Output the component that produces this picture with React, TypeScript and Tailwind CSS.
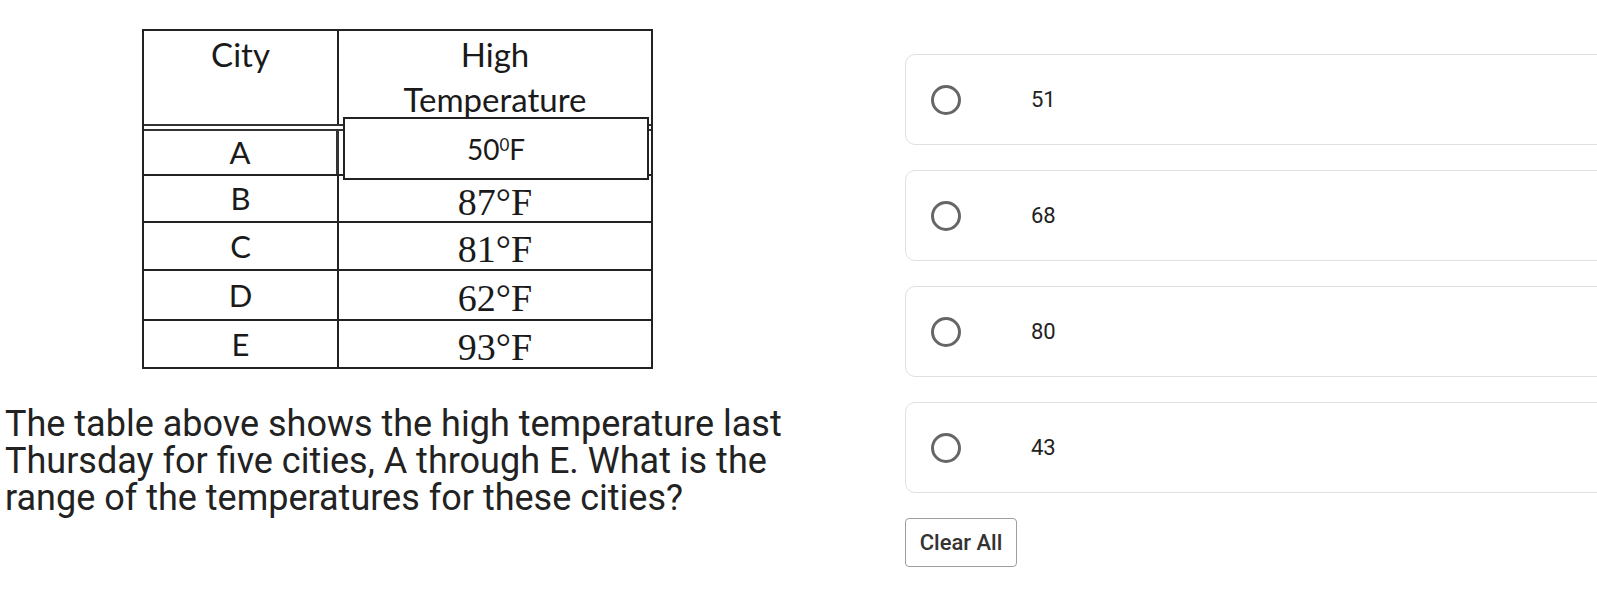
import type { ReactNode } from "react";

type Row = { city: string; temp: string; h: string };

const rows: Row[] = [
  { city: "B", temp: "87°F", h: "h-[47px]" },
  { city: "C", temp: "81°F", h: "h-[48px]" },
  { city: "D", temp: "62°F", h: "h-[50px]" },
  { city: "E", temp: "93°F", h: "h-[46px]" },
];

const choices = ["51", "68", "80", "43"];

const sans = "font-['Lato','Open_Sans',sans-serif]";
const serif = "font-['Liberation_Serif','DejaVu_Serif',serif]";

function Cell({ children, className = "" }: { children: ReactNode; className?: string }) {
  return (
    <div className={`flex items-center justify-center leading-none ${className}`}>{children}</div>
  );
}

function TemperatureTable() {
  return (
    <div className="relative ml-[142px] w-[511px] border-2 border-[#222] bg-white text-[#1a1a1a]">
      {/* header */}
      <div className="grid grid-cols-[195px_1fr] border-b-[7px] border-double border-[#333]">
        <div className={`h-[93px] border-r-2 border-[#222] pt-[1px] text-center text-[33px] leading-[45px] ${sans}`}>
          City
        </div>
        <div className={`h-[93px] pt-[1px] text-center text-[33px] leading-[45px] ${sans}`}>
          High
          <br />
          Temperature
        </div>
      </div>

      {/* row A, its temperature sits in the box laid over it */}
      <div className="grid h-[45px] grid-cols-[195px_1fr] border-b-2 border-[#222]">
        <Cell className={`border-r-[3px] border-[#333] text-[31px] ${sans}`}>A</Cell>
        <div />
      </div>

      {rows.map((row, i) => (
        <div
          key={row.city}
          className={`grid ${row.h} grid-cols-[195px_1fr] overflow-hidden ${i < rows.length - 1 ? "border-b-2 border-[#222]" : ""}`}
        >
          <Cell className={`border-r-2 border-[#222] text-[31px] ${sans}`}>{row.city}</Cell>
          <Cell className={`pt-[6px] text-[38px] ${serif}`}>{row.temp}</Cell>
        </div>
      ))}

      {/* overlaid box for city A */}
      <div
        className={`absolute left-[199px] top-[86px] flex h-[63px] w-[306px] items-center justify-center border-2 border-[#222] bg-white text-[28px] leading-none ${sans}`}
      >
        <span>
          50<span className="relative -top-[9px] text-[17px]">0</span>F
        </span>
      </div>
    </div>
  );
}

function Choice({ label }: { label: string }) {
  return (
    <label className="flex h-[91px] w-[740px] cursor-pointer items-center rounded-[10px] border border-[#e0e0e0] bg-white pl-[25px]">
      <span className="h-[30px] w-[30px] shrink-0 rounded-full border-[3px] border-[#666]" />
      <span className="ml-[70px] text-[22px] text-[#222]">{label}</span>
    </label>
  );
}

export default function App() {
  return (
    <div className="flex h-[601px] w-full overflow-hidden bg-white font-['Roboto','Liberation_Sans',sans-serif]">
      <div className="w-[905px] shrink-0 pt-[29px]">
        <TemperatureTable />
        <p className="mt-[37px] pl-[5px] text-[36px] leading-[37px] text-[#222]">
          The table above shows the high temperature last
          <br />
          Thursday for five cities, A through E. What is the
          <br />
          range of the temperatures for these cities?
        </p>
      </div>

      <div className="flex shrink-0 flex-col gap-[25px] pt-[54px]">
        {choices.map((c) => (
          <Choice key={c} label={c} />
        ))}
        <button
          type="button"
          className="h-[49px] w-[112px] rounded-[4px] border border-[#9e9e9e] bg-white text-[22px] font-medium text-[#333]"
        >
          Clear All
        </button>
      </div>
    </div>
  );
}
